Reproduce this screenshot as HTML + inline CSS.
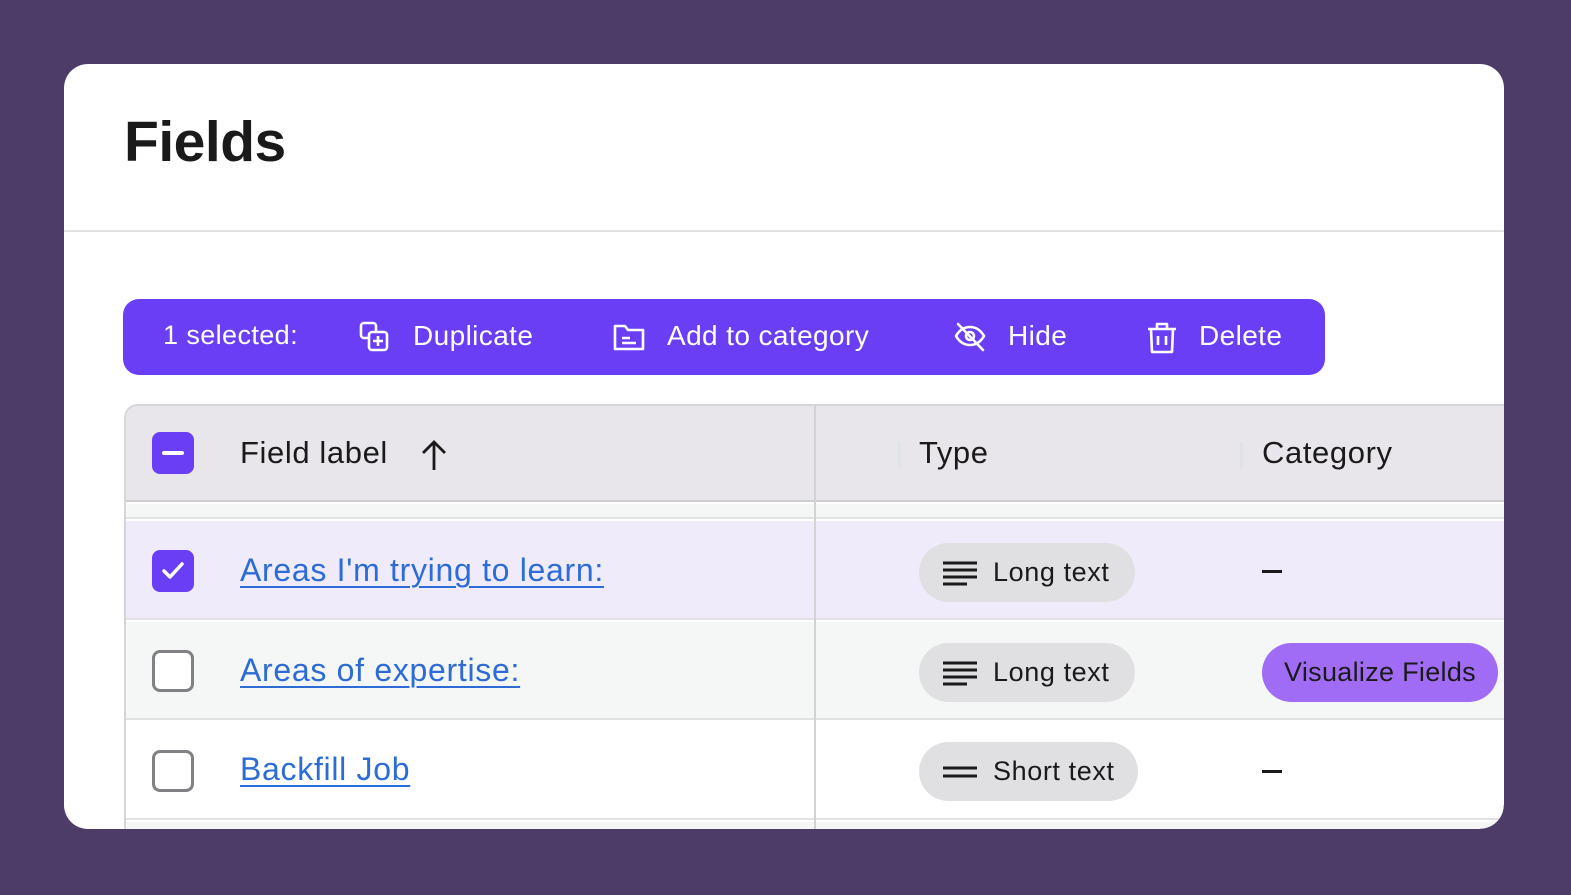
<!DOCTYPE html>
<html><head><meta charset="utf-8"><style>
*{margin:0;padding:0;box-sizing:border-box}
body{width:1571px;height:895px;background:#4d3b68;font-family:"Liberation Sans",sans-serif;position:relative;overflow:hidden}
.card{position:absolute;left:64px;top:64px;width:1440px;height:765px;background:#fff;border-radius:24px;overflow:hidden}
.a{position:absolute;white-space:nowrap}
.tb{color:#fff;font-size:28px;top:320px;letter-spacing:0.4px}
.pill{position:absolute;background:#e0e0e3;border-radius:30px;height:59px;font-size:27px;color:#1a1a1a;display:flex;align-items:center;padding-left:22px;letter-spacing:0.6px}
.pill svg{margin-right:14px}
.link{color:#2d6bd6;text-decoration:underline;text-decoration-thickness:2px;text-underline-offset:5px;font-size:32px;letter-spacing:0.7px}
.cb{position:absolute;left:152px;width:42px;height:42px;border-radius:8px}
</style></head><body>
<div class="card">
<div class="a" style="left:60px;top:45px;font-size:57px;font-weight:bold;color:#1a1a1a;letter-spacing:-0.5px">Fields</div>
<div style="position:absolute;left:0;top:166px;width:1440px;height:2px;background:#e2e2e2"></div>
</div>
<div style="position:absolute;left:123px;top:299px;width:1202px;height:76px;background:#6a3ef5;border-radius:16px"></div>
<div class="a tb" style="left:163px;font-size:27px">1 selected:</div>
<svg class="a" style="left:358px;top:320px" width="34" height="34" viewBox="0 0 34 34" fill="none" stroke="#fff" stroke-width="2.6" stroke-linejoin="round"><rect x="3" y="3" width="15" height="15" rx="3"/><rect x="11" y="12" width="18" height="18" rx="3" fill="#6a3ef5"/><path d="M20 16v10M15 21h10"/></svg>
<div class="a tb" style="left:413px">Duplicate</div>
<svg class="a" style="left:612px;top:322px" width="34" height="30" viewBox="0 0 34 30" fill="none" stroke="#fff" stroke-width="2.6" stroke-linejoin="round"><path d="M3 4h10l3 4h15v19H3z"/><path d="M10 16h8M10 21h14"/></svg>
<div class="a tb" style="left:667px">Add to category</div>
<svg class="a" style="left:953px;top:321px" width="34" height="32" viewBox="0 0 34 32" fill="none" stroke="#fff" stroke-width="2.6" stroke-linecap="round"><path d="M3 15c4-7 9-9 14-9s10 2 14 9c-4 7-9 9-14 9s-10-2-14-9z"/><circle cx="17" cy="15" r="4"/><path d="M5 3l25 26"/></svg>
<div class="a tb" style="left:1008px">Hide</div>
<svg class="a" style="left:1145px;top:320px" width="34" height="36" viewBox="0 0 34 36" fill="none" stroke="#fff" stroke-width="2.6" stroke-linejoin="round"><path d="M3 9h28M12 9V4h10v5M6 9l1 23h20l1-23"/><path d="M13 16v9M21 16v9"/></svg>
<div class="a tb" style="left:1199px">Delete</div>
<div style="position:absolute;left:124px;top:404px;width:1400px;height:430px;border:2px solid #d6d6d9;border-radius:14px 0 0 0;background:#fff;overflow:hidden">
<div style="position:absolute;left:0;top:0;width:1400px;height:96px;background:#e8e6eb;border-bottom:2px solid #cfcfd2"></div>
<div style="position:absolute;left:0;top:98px;width:1400px;height:15px;background:#f5f6f6;border-bottom:2px solid #e2e2e4"></div>
<div style="position:absolute;left:0;top:115px;width:1400px;height:99px;background:#efebfb;border-bottom:2px solid #e2e2e4"></div>
<div style="position:absolute;left:0;top:216px;width:1400px;height:98px;background:#f5f6f6;border-bottom:2px solid #e2e2e4"></div>
<div style="position:absolute;left:0;top:316px;width:1400px;height:98px;background:#fff;border-bottom:2px solid #e2e2e4"></div>
<div style="position:absolute;left:0;top:416px;width:1400px;height:20px;background:#f5f6f6"></div>
<div style="position:absolute;left:688px;top:0;width:2px;height:430px;background:#d2d2d5"></div>
<div style="position:absolute;left:772px;top:36px;width:3px;height:26px;background:#dfe3e8"></div>
<div style="position:absolute;left:1114px;top:36px;width:3px;height:26px;background:#dfe3e8"></div>
</div>
<div class="cb" style="top:432px;background:#6a3ef5"><div style="position:absolute;left:10px;top:19px;width:22px;height:4px;background:#fff;border-radius:2px"></div></div>
<div class="a" style="left:240px;top:435px;font-size:31px;color:#1a1a1a;letter-spacing:0.6px">Field label</div>
<svg class="a" style="left:420px;top:438px" width="28" height="34" viewBox="0 0 28 34" fill="none" stroke="#1a1a1a" stroke-width="2.8"><path d="M14 32V4M3 15L14 4l11 11"/></svg>
<div class="a" style="left:919px;top:435px;font-size:31px;color:#1a1a1a;letter-spacing:0.6px">Type</div>
<div class="a" style="left:1262px;top:435px;font-size:31px;color:#1a1a1a;letter-spacing:0.6px">Category</div>
<div class="cb" style="top:550px;background:#6a3ef5"><svg width="42" height="42" viewBox="0 0 42 42" fill="none" stroke="#fff" stroke-width="3.5" stroke-linecap="round" stroke-linejoin="round"><path d="M12 21l6 6 12-13"/></svg></div>
<div class="a link" style="left:240px;top:552px">Areas I'm trying to learn:</div>
<div class="pill" style="left:919px;top:543px;width:216px"><svg width="38" height="26" viewBox="0 0 38 26" stroke="#1a1a1a" stroke-width="3"><path d="M2 3h34M2 10h34M2 17h34M2 24h24"/></svg>Long text</div>
<div class="a" style="left:1262px;top:570px;width:20px;height:3px;background:#1a1a1a"></div>
<div class="cb" style="top:650px;border:3px solid #808085;background:#fff"></div>
<div class="a link" style="left:240px;top:652px">Areas of expertise:</div>
<div class="pill" style="left:919px;top:643px;width:216px"><svg width="38" height="26" viewBox="0 0 38 26" stroke="#1a1a1a" stroke-width="3"><path d="M2 3h34M2 10h34M2 17h34M2 24h24"/></svg>Long text</div>
<div class="a" style="left:1262px;top:643px;width:236px;height:59px;border-radius:30px;background:#a06cf5;font-size:27px;color:#1a1a1a;line-height:59px;text-align:center;letter-spacing:0.3px">Visualize Fields</div>
<div class="cb" style="top:750px;border:3px solid #808085;background:#fff"></div>
<div class="a link" style="left:240px;top:751px">Backfill Job</div>
<div class="pill" style="left:919px;top:742px;width:219px"><svg width="38" height="20" viewBox="0 0 38 20" stroke="#1a1a1a" stroke-width="3"><path d="M2 6h34M2 14h34"/></svg>Short text</div>
<div class="a" style="left:1262px;top:770px;width:20px;height:3px;background:#1a1a1a"></div>
<div style="position:absolute;left:1504px;top:0;width:67px;height:895px;background:#4d3b68"></div>
<div style="position:absolute;left:0;top:829px;width:1571px;height:66px;background:#4d3b68"></div>
<div style="position:absolute;left:1480px;top:805px;width:24px;height:24px;background:radial-gradient(circle at 0 0,transparent 23.5px,#4d3b68 24px)"></div>
</body></html>
